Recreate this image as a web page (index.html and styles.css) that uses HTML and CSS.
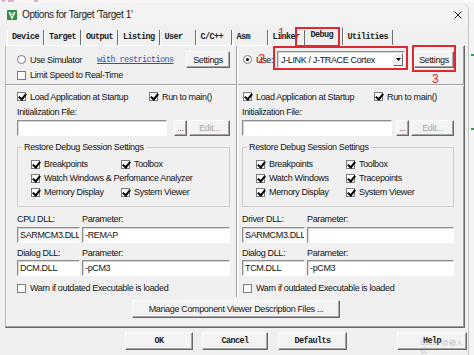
FILE: index.html
```html
<!DOCTYPE html>
<html>
<head>
<meta charset="utf-8">
<link rel="stylesheet" href="styles.css">
</head>
<body>
<div class="strip"><i class="frag f1"></i><i class="frag f2"></i><i class="frag f3"></i></div>
<div class="stage">
  <div class="window">
    <div class="titlebar">
      <svg class="appicon" viewBox="0 0 10 10"><rect width="10" height="10" rx="1" fill="#2f8f3f"/><path d="M2 2 L5 8.2 L8 2" stroke="#fff" stroke-width="1.3" fill="none"/><path d="M3.6 2 L5 5.2 L6.4 2" stroke="#cfe9d2" stroke-width="0.8" fill="none"/></svg>
      <span class="title">Options for Target 'Target 1'</span>
      <svg class="close" viewBox="0 0 8 8"><path d="M0.5 0.5 L7.5 7.5 M7.5 0.5 L0.5 7.5" stroke="#222" stroke-width="1" fill="none"/></svg>
    </div>
    <div class="tabs">
      <span class="tab">Device</span>
      <span class="tab">Target</span>
      <span class="tab">Output</span>
      <span class="tab">Listing</span>
      <span class="tab">User</span>
      <span class="tab">C/C++</span>
      <span class="tab">Asm</span>
      <span class="tab">Linker</span>
      <span class="tab active">Debug</span>
      <span class="tab">Utilities</span>
    </div>
    <div class="panel">
      <div class="cols">
        <div class="col col-left">
          <div class="r1">
            <label class="opt w80"><span class="rb"></span>Use Simulator</label>
            <a class="link">with restrictions</a>
            <button class="btn settings">Settings</button>
          </div>
          <div class="r2"><label class="opt"><span class="cb"></span>Limit Speed to Real-Time</label></div>
          <div class="sep"></div>
          <div class="r3">
            <label class="opt w132"><span class="cb on"></span>Load Application at Startup</label>
            <label class="opt"><span class="cb on"></span>Run to main()</label>
          </div>
          <div class="lbl">Initialization File:</div>
          <div class="filerow">
            <div class="inp file"></div>
            <button class="btn dots">...</button>
            <button class="btn edit">Edit...</button>
          </div>
          <fieldset class="group">
            <legend>Restore Debug Session Settings</legend>
            <div class="ggrid">
              <label class="opt"><span class="cb on"></span>Breakpoints</label>
              <label class="opt"><span class="cb on"></span>Toolbox</label>
              <label class="opt span2"><span class="cb on"></span>Watch Windows &amp; Perfomance Analyzer</label>
              <label class="opt"><span class="cb on"></span>Memory Display</label>
              <label class="opt"><span class="cb on"></span>System Viewer</label>
            </div>
          </fieldset>
          <div class="dllhead"><span>CPU DLL:</span><span>Parameter:</span></div>
          <div class="dllrow"><div class="inp ro">SARMCM3.DLL</div><div class="inp">-REMAP</div></div>
          <div class="dllhead mt5"><span>Dialog DLL:</span><span>Parameter:</span></div>
          <div class="dllrow mt2"><div class="inp">DCM.DLL</div><div class="inp">-pCM3</div></div>
          <div class="warn"><label class="opt"><span class="cb"></span>Warn if outdated Executable is loaded</label></div>
        </div>
        <div class="col col-right">
          <div class="r1">
            <label class="opt usebox"><span class="rb on"></span>Use:</label>
            <div class="inp combo"><span>J-LINK / J-TRACE Cortex</span><span class="arrow"><svg viewBox="0 0 5 3" width="5" height="3"><path d="M0 0 H5 L2.5 3 Z" fill="#000"/></svg></span></div>
            <button class="btn settings settings-r">Settings</button>
          </div>
          <div class="r2"></div>
          <div class="sep"></div>
          <div class="r3">
            <label class="opt w132 ind"><span class="cb on"></span>Load Application at Startup</label>
            <label class="opt"><span class="cb on"></span>Run to main()</label>
          </div>
          <div class="lbl">Initialization File:</div>
          <div class="filerow">
            <div class="inp file"></div>
            <button class="btn dots">...</button>
            <button class="btn edit edit-r">Edit...</button>
          </div>
          <fieldset class="group">
            <legend>Restore Debug Session Settings</legend>
            <div class="ggrid">
              <label class="opt"><span class="cb on"></span>Breakpoints</label>
              <label class="opt"><span class="cb on"></span>Toolbox</label>
              <label class="opt"><span class="cb on"></span>Watch Windows</label>
              <label class="opt"><span class="cb on"></span>Tracepoints</label>
              <label class="opt"><span class="cb on"></span>Memory Display</label>
              <label class="opt"><span class="cb on"></span>System Viewer</label>
            </div>
          </fieldset>
          <div class="dllhead"><span>Driver DLL:</span><span>Parameter:</span></div>
          <div class="dllrow"><div class="inp ro">SARMCM3.DLL</div><div class="inp"></div></div>
          <div class="dllhead mt5"><span>Dialog DLL:</span><span>Parameter:</span></div>
          <div class="dllrow mt2"><div class="inp">TCM.DLL</div><div class="inp">-pCM3</div></div>
          <div class="warn"><label class="opt ind"><span class="cb"></span>Warn if outdated Executable is loaded</label></div>
        </div>
      </div>
      <div class="manage-row"><button class="btn manage">Manage Component Viewer Description Files ...</button></div>
    </div>
    <div class="actions">
      <button class="btn abtn ok">OK</button>
      <button class="btn abtn cancel">Cancel</button>
      <button class="btn abtn defaults">Defaults</button>
      <button class="btn abtn help">Help</button>
    </div>

    <div class="ann ann-tab"></div>
    <div class="ann ann-combo"></div>
    <div class="ann ann-set"></div>
    <span class="num n1">1</span>
    <span class="num n2">2</span>
    <span class="num n3">3</span>
    <span class="wm">CSDN @嵌入式</span>
  </div>
  <div class="side"><i class="mark m1"></i><i class="mark m2"></i></div>
</div>
</body>
</html>
```

FILE: styles.css
```css
* { box-sizing: border-box; }
html, body { margin: 0; padding: 0; }
body {
  width: 474px; height: 355px; overflow: hidden;
  background: #f6f6f6;
  font-family: "Liberation Sans", Arial, sans-serif;
  font-size: 9px; line-height: 10px; letter-spacing: -0.35px;
  color: #141414;
}
.strip { height: 3px; overflow: hidden; background: #fbf8f9; display: flex; align-items: flex-start; padding-left: 2px; }
.frag { display: block; height: 2px; background: #d98ab2; opacity: 0.7; }
.f1 { width: 3px; }
.f2 { width: 6px; margin-left: 3px; }
.f3 { width: 4px; margin-left: 20px; }

.stage { display: flex; height: 352px; }
.window {
  position: relative; flex: none; width: 469px; height: 352px;
  background: #f0f0f0; border-right: 1px solid #c4c4c4;
  border-top-right-radius: 7px;
  display: flex; flex-direction: column;
}
.titlebar {
  flex: none; height: 23px; display: flex; align-items: center;
  padding: 0 6px 0 7px; background: #f3f3f3; border-top-right-radius: 7px;
}
.appicon { width: 10px; height: 10px; flex: none; }
.title { margin-left: 5px; font-size: 10px; letter-spacing: -0.4px; color: #1b1b1b; }
.close { margin-left: auto; width: 8px; height: 8px; }

.tabs { flex: none; height: 19px; display: flex; align-items: flex-end; padding-left: 7px; }
.tab {
  height: 15px; min-width: 36px; padding: 0 4px;
  border-left: 1px solid #fff; border-right: 1px solid #6e6e6e;
  font-family: "Liberation Mono", monospace; font-size: 8.5px; letter-spacing: -0.6px; font-weight: bold;
  line-height: 14px; color: #222; white-space: nowrap;
}
.tab.active { height: 18px; width: 40px; margin-left: -2px; padding-left: 7px; border-top: 1px solid #fff; line-height: 15px; }

.panel {
  flex: none; margin-left: 5px; width: 460px; height: 283px;
  border: 1px solid; border-color: #fff #696969 #696969 #b8b8b8;
  box-shadow: inset -1px -1px 0 #a0a0a0;
}
.cols { display: grid; grid-template-columns: 231px 227px; height: 251px; }
.col { display: flex; flex-direction: column; padding-top: 4px; }
.col-left { --pl: 11px; --pr: 6px; padding-left: 11px; padding-right: 6px; border-right: 1px solid #a0a0a0; }
.col-right { --pl: 4px; --pr: 10px; padding-left: 4px; padding-right: 10px; border-left: 1px solid #fff; }

.r1 { flex: none; height: 19px; display: flex; align-items: center; }
.r2 { flex: none; height: 12px; display: flex; align-items: center; }
.sep {
  flex: none; height: 2px;
  margin: 3px calc(-1 * var(--pr)) 0 calc(-1 * var(--pl));
  border-top: 1px solid #a0a0a0; border-bottom: 1px solid #fff;
}
.r3 { flex: none; height: 21px; display: flex; align-items: center; }
.lbl { flex: none; height: 10px; }
.filerow { flex: none; margin-top: 3px; height: 16px; display: flex; }

.opt { display: flex; align-items: center; white-space: nowrap; }
.w80 { width: 80px; flex: none; }
.w132 { width: 132px; flex: none; }
.ind { padding-left: 1px; }
.usebox { width: 35px; flex: none; padding-left: 1px; }

.cb { flex: none; width: 9px; height: 9px; margin-right: 4px; background: #fff; border: 1px solid #7b7b7b; position: relative; }
.cb.on::after {
  content: ""; position: absolute; left: 2px; top: -1px; width: 3px; height: 6px;
  border: solid #000; border-width: 0 2px 2px 0; transform: rotate(38deg);
}
.rb { flex: none; width: 9px; height: 9px; margin-right: 4px; border-radius: 50%; background: #fff; border: 1px solid #7b7b7b; position: relative; }
.rb.on::after { content: ""; position: absolute; left: 2px; top: 2px; width: 3px; height: 3px; border-radius: 50%; background: #000; }

.link {
  color: #2f4fc4; text-decoration: underline;
  font-family: "Liberation Mono", monospace; font-size: 8.5px; letter-spacing: -0.6px;
}

.btn {
  font: inherit; letter-spacing: inherit; color: #141414;
  background: #f3f3f3; border: 1px solid; border-color: #fff #6a6a6a #6a6a6a #fff;
  box-shadow: inset -1px -1px 0 #a5a5a5;
  padding: 0; margin: 0; flex: none;
  display: flex; align-items: center; justify-content: center; white-space: nowrap;
}
.settings { margin-left: auto; width: 44px; height: 17px; }
.settings-r { width: 40px; }
.dots { margin-left: auto; width: 13px; height: 16px; color: #666; }
.edit { margin-left: 2px; width: 41px; height: 16px; color: #a6a6a6; }
.edit-r { width: 43px; }

.inp {
  background: #fff; border: 1px solid; border-color: #8c8c8c #fff #fff #8c8c8c;
  box-shadow: inset 1px 1px 0 #d6d6d6;
  padding-left: 2px; display: flex; align-items: center; white-space: nowrap; overflow: hidden;
}
.inp.ro { background: #f7f7f7; }
.file { width: 150px; flex: none; }
.combo { flex: none; width: 128px; height: 17px; justify-content: space-between; padding: 0 1px 0 3px; }
.arrow {
  width: 10px; height: 13px; background: #f0f0f0;
  border: 1px solid; border-color: #fff #6a6a6a #6a6a6a #fff;
  display: flex; align-items: center; justify-content: center;
}
.arrow svg { display: block; }

.group { flex: none; margin: 6px 0 0; padding: 5px 0 7px 0; border: 1px solid #cdcdcd; min-width: 0; min-inline-size: 0; }
.group legend { padding: 0 2px; margin-left: 4px; line-height: 10px; height: 10px; }
.ggrid { display: grid; grid-template-columns: 90px 1fr; grid-auto-rows: 14px; align-items: center; padding-left: 13px; }
.span2 { grid-column: 1 / 3; }

.dllhead { flex: none; margin-top: 7px; height: 10px; display: grid; grid-template-columns: 65px 1fr; }
.dllrow { flex: none; margin-top: 3px; height: 16px; display: grid; grid-template-columns: 63px 1fr; column-gap: 2px; }
.dllhead.mt5 { margin-top: 5px; }
.dllrow.mt2 { margin-top: 2px; }
.warn { flex: none; margin-top: 6px; height: 12px; display: flex; align-items: center; }

.manage-row { margin-top: 3px; padding-left: 126px; height: 18px; display: flex; }
.manage { width: 208px; height: 18px; }

.actions { flex: none; margin-top: 4px; height: 18px; display: flex; padding-left: 125px; padding-right: 1px; }
.abtn {
  height: 18px; font-family: "Liberation Mono", monospace; font-size: 8.5px;
  letter-spacing: -0.6px; font-weight: bold; color: #222;
}
.ok { width: 68px; }
.cancel { width: 66px; margin-left: 9px; }
.defaults { width: 69px; margin-left: 10px; }
.help { width: 70px; margin-left: auto; }

.ann { position: absolute; border: 2px solid #e0282e; }
.ann-tab { left: 295px; top: 24px; width: 45px; height: 20px; }
.ann-combo { left: 273px; top: 43px; width: 135px; height: 24px; }
.ann-set { left: 412px; top: 42px; width: 44px; height: 27px; }
.num { position: absolute; color: #e0282e; font-size: 12px; line-height: 12px; letter-spacing: 0; }
.n1 { left: 278px; top: 24px; }
.n2 { left: 258px; top: 49px; font-size: 13px; line-height: 13px; }
.n3 { left: 432px; top: 70px; }
.wm {
  position: absolute; left: 420px; top: 336px;
  font-family: "Liberation Sans", "Noto Sans CJK SC", sans-serif; font-size: 7px; line-height: 8px; letter-spacing: 0;
  color: rgba(170, 170, 170, 0.7);
}

.side { flex: none; width: 5px; background: #f4f4f4; display: flex; flex-direction: column; }
.mark { display: block; flex: none; width: 3px; height: 2px; margin-left: 2px; background: #2e9e4a; }
.m1 { margin-top: 51px; }
.m2 { margin-top: 72px; }
```
